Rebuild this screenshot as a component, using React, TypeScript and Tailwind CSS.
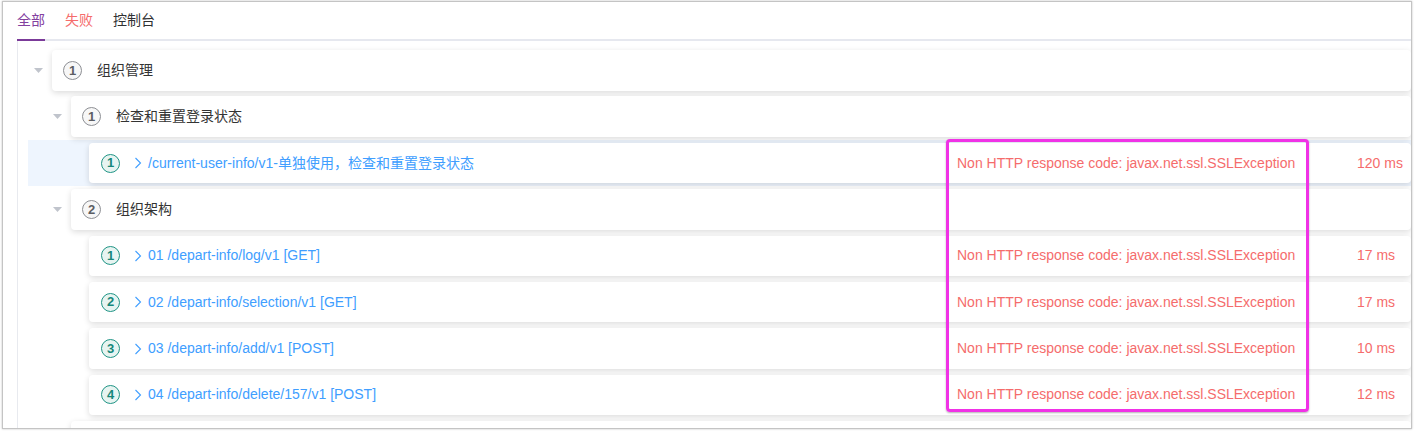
import React from 'react';

type Node = {
  level: 0 | 1 | 2;
  index: number;
  title: string;
  error?: string;
  time?: string;
  active?: boolean;
};

const ERR = 'Non HTTP response code: javax.net.ssl.SSLException';

const nodes: Node[] = [
  { level: 0, index: 1, title: '组织管理' },
  { level: 1, index: 1, title: '检查和重置登录状态' },
  { level: 2, index: 1, title: '/current-user-info/v1-单独使用，检查和重置登录状态', error: ERR, time: '120 ms', active: true },
  { level: 1, index: 2, title: '组织架构' },
  { level: 2, index: 1, title: '01 /depart-info/log/v1 [GET]', error: ERR, time: '17 ms' },
  { level: 2, index: 2, title: '02 /depart-info/selection/v1 [GET]', error: ERR, time: '17 ms' },
  { level: 2, index: 3, title: '03 /depart-info/add/v1 [POST]', error: ERR, time: '10 ms' },
  { level: 2, index: 4, title: '04 /depart-info/delete/157/v1 [POST]', error: ERR, time: '12 ms' },
  { level: 1, index: 3, title: '' },
];

const cjk = { fontFamily: '"Liberation Sans", "Noto Sans CJK SC", sans-serif' };

const Caret: React.FC = () => (
  <svg width="9" height="5" viewBox="0 0 9 5" className="shrink-0">
    <path d="M0 0 L9 0 L4.5 5 Z" fill="#c0c4cc" />
  </svg>
);

const Chevron: React.FC = () => (
  <svg width="8" height="12" viewBox="0 0 8 12" className="shrink-0">
    <path d="M1.5 1 L6.5 6 L1.5 11" fill="none" stroke="#409eff" strokeWidth="1.1" />
  </svg>
);

const Badge: React.FC<{ n: number; teal?: boolean }> = ({ n, teal }) =>
  teal ? (
    <span className="flex h-[19px] w-[19px] shrink-0 items-center justify-center rounded-full border-[1.5px] border-[#1f9485] bg-[#e7f4f1] text-[13px] font-bold text-[#17877a]">
      {n}
    </span>
  ) : (
    <span className="flex h-[19px] w-[19px] shrink-0 items-center justify-center rounded-full border-[1.5px] border-[#8d8f94] bg-[#f7f7f7] text-[13px] font-bold text-[#5c5e63]">
      {n}
    </span>
  );

const Row: React.FC<{ node: Node }> = ({ node }) => {
  const pad = node.level === 0 ? 'pl-[24px]' : node.level === 1 ? 'pl-[43px]' : 'pl-[61px]';
  return (
    <div className={`ml-[10px] flex h-[46.375px] items-start pt-[3px] ${pad} ${node.active ? 'bg-[#eef5fe]' : ''}`}>
      {node.level < 2 ? (
        <div className="flex h-[40.5px] w-[18px] -ml-[18px] items-center justify-start">
          <Caret />
        </div>
      ) : null}
      <div className="flex h-[40.5px] flex-1 items-center rounded-[4px] bg-white shadow-[0_2px_6px_rgba(0,0,0,0.14)]">
        {node.level < 2 ? (
          <div className="flex flex-1 items-center pl-[11px]">
            {node.title ? <Badge n={node.index} /> : null}
            <span className="ml-[15px] text-[14px] text-[#333333]">{node.title}</span>
          </div>
        ) : (
          <>
            <div className="flex flex-1 items-center pl-[12px]">
              <Badge n={node.index} teal />
              <span className="ml-[14px]"><Chevron /></span>
              <span className="ml-[6px] text-[14px] text-[#409eff]">{node.title}</span>
            </div>
            <span className="w-[400px] text-[14px] text-[#f56c6c]">{node.error}</span>
            <span className="w-[54px] text-[14px] text-[#f56c6c]">{node.time}</span>
          </>
        )}
      </div>
    </div>
  );
};

const App: React.FC = () => {
  return (
    <div className="relative h-[431px] w-[1415px] overflow-hidden bg-white" style={cjk}>
      <div className="ml-[2px] mt-[1px] h-[428px] w-[1410px] overflow-hidden border border-[#c4c4c4] bg-white shadow-[0_0_2px_rgba(0,0,0,0.25)]">
        <div className="flex h-full flex-col pl-[14px]">
          <div className="flex h-[39px] shrink-0 items-end gap-[20px] border-b-2 border-[#e6e8ef]">
            <div className="-mb-[2px] flex h-[38px] items-center border-b-2 border-[#7b3a99] pb-[2px] text-[14px] text-[#83409f]">全部</div>
            <div className="-mb-[2px] flex h-[38px] items-center pb-[4px] text-[14px] text-[#f56c6c]">失败</div>
            <div className="-mb-[2px] flex h-[38px] items-center pb-[4px] text-[14px] text-[#303133]">控制台</div>
          </div>
          <div className="flex-1 border-l border-[#e8eaef] pt-[6px]">
            {nodes.map((node, i) => (
              <Row key={i} node={node} />
            ))}
          </div>
        </div>
      </div>
      <div className="absolute left-[946px] top-[139px] h-[273px] w-[363px] rounded-[4px] border-[3px] border-[#f032e6] shadow-[0_1px_2px_rgba(0,0,0,0.3)]" />
    </div>
  );
};

export default App;
